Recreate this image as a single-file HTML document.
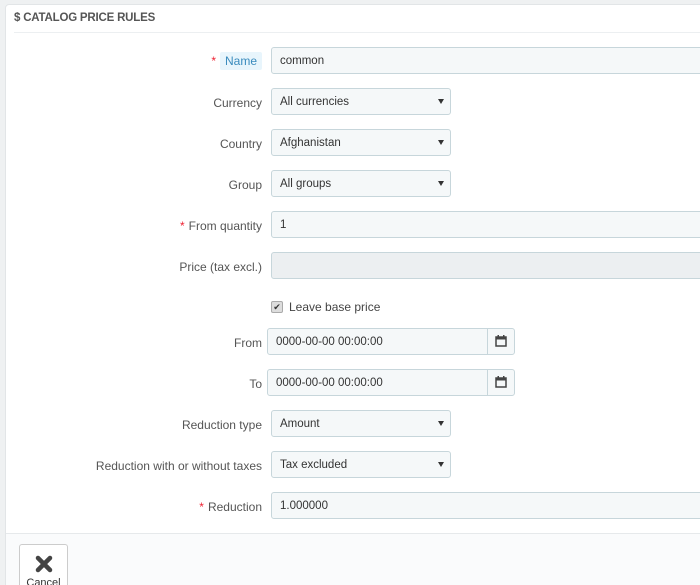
<!DOCTYPE html>
<html style="width:700px;height:585px;overflow:hidden"><head><style>
body{margin:0;width:700px;height:585px;overflow:hidden;position:relative;background:#eff1f2;font-family:"Liberation Sans",sans-serif;font-size:11.5px;color:#555;}
.panel{position:absolute;left:5px;top:4px;width:700px;height:585px;background:#fff;border:1px solid #e2e5e7;border-radius:4px;box-sizing:border-box;}
.hd{position:absolute;left:8px;top:0;right:0;height:27px;border-bottom:1px solid #eceff1;font-size:11.5px;font-weight:bold;color:#555;line-height:27px;letter-spacing:-0.2px;}
.lbl{position:absolute;right:438px;font-size:12px;color:#555;text-align:right;white-space:nowrap;}
.star{color:#e23;margin-right:4px;}
.inp{position:absolute;height:25px;border:1px solid #c7d6db;background:#f5f8f9;border-radius:3px;line-height:27px;padding-left:8px;box-sizing:content-box;font-size:11.5px;color:#333;}
.sel:after{content:"";position:absolute;right:6px;top:10px;border-left:3px solid transparent;border-right:3px solid transparent;border-top:5px solid #333;}
.addon{position:absolute;right:0;top:0;width:26px;height:25px;border-left:1px solid #c7d6db;}
.btn{position:absolute;left:13px;top:10px;width:47px;height:50px;background:#fff;border:1px solid #ccc;border-bottom:none;border-radius:3px 3px 0 0;text-align:center;color:#333;font-size:11px;overflow:hidden;}
</style></head><body>
<div class="panel">
<div class="hd">$ CATALOG PRICE RULES</div>
</div>
<div style="position:absolute;left:0;top:0;width:700px;height:585px;overflow:hidden">
<div class="lbl" style="top:54px"><span class="star">*</span><span style="background:#e8f5fc;color:#3a8bbd;padding:2px 5px;border-radius:2px">Name</span></div>
<div class="inp" style="left:271px;top:47px;width:440px">common</div>
<div class="lbl" style="top:96px">Currency</div>
<div class="inp sel" style="left:271px;top:88px;width:170px">All currencies</div>
<div class="lbl" style="top:137px">Country</div>
<div class="inp sel" style="left:271px;top:129px;width:170px">Afghanistan</div>
<div class="lbl" style="top:178px">Group</div>
<div class="inp sel" style="left:271px;top:170px;width:170px">All groups</div>
<div class="lbl" style="top:219px"><span class="star">*</span>From quantity</div>
<div class="inp" style="left:271px;top:211px;width:440px">1</div>
<div class="lbl" style="top:260px">Price (tax excl.)</div>
<div class="inp" style="left:271px;top:252px;width:440px;background:#eceff1"></div>
<div style="position:absolute;left:271px;top:301px;width:10px;height:10px;border:1px solid #aaa;background:#ddd;border-radius:2px;font-size:9px;line-height:10px;text-align:center;color:#333">✔</div>
<div style="position:absolute;left:289px;top:300px;font-size:12px;color:#444">Leave base price</div>
<div class="lbl" style="top:336px;right:438px">From</div>
<div class="inp" style="left:267px;top:328px;width:238px">0000-00-00 00:00:00<div class="addon"><svg width="26" height="25" viewBox="0 0 26 25"><rect x="8" y="8" width="10" height="9" fill="none" stroke="#444" stroke-width="1.5"/><rect x="8" y="8" width="10" height="2.5" fill="#444"/><rect x="9.5" y="6" width="1.5" height="3" fill="#444"/><rect x="15" y="6" width="1.5" height="3" fill="#444"/></svg></div></div>
<div class="lbl" style="top:377px">To</div>
<div class="inp" style="left:267px;top:369px;width:238px">0000-00-00 00:00:00<div class="addon"><svg width="26" height="25" viewBox="0 0 26 25"><rect x="8" y="8" width="10" height="9" fill="none" stroke="#444" stroke-width="1.5"/><rect x="8" y="8" width="10" height="2.5" fill="#444"/><rect x="9.5" y="6" width="1.5" height="3" fill="#444"/><rect x="15" y="6" width="1.5" height="3" fill="#444"/></svg></div></div>
<div class="lbl" style="top:418px">Reduction type</div>
<div class="inp sel" style="left:271px;top:410px;width:170px">Amount</div>
<div class="lbl" style="top:459px">Reduction with or without taxes</div>
<div class="inp sel" style="left:271px;top:451px;width:170px">Tax excluded</div>
<div class="lbl" style="top:500px"><span class="star">*</span>Reduction</div>
<div class="inp" style="left:271px;top:492px;width:440px">1.000000</div>
</div>
<div style="position:absolute;left:6px;top:533px;width:694px;height:52px;background:#fafbfc;border-top:1px solid #e6e9eb;overflow:hidden">
<div class="btn"><svg width="20" height="20" viewBox="0 0 20 20" style="margin-top:9px"><path d="M4 4L16 16M16 4L4 16" stroke="#444" stroke-width="4.5" stroke-linecap="round"/></svg><div>Cancel</div></div>
</div>
</body></html>
